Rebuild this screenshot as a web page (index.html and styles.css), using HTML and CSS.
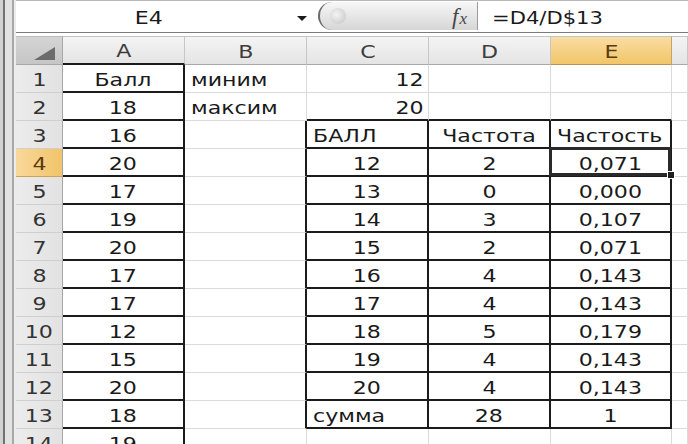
FILE: index.html
```html
<!DOCTYPE html>
<html lang="ru">
<head>
<meta charset="utf-8">
<title>Excel — частость</title>
<link rel="stylesheet" href="styles.css">
</head>
<body>
<div class="app">
  <div class="edge"></div>
  <div class="main">
    <div class="fbar">
      <div class="namebox"><span class="t">E4</span></div>
      <div class="dd"><span class="tri"></span></div>
      <div class="pill"><span class="orb"></span><span class="fx"><i>f</i><i class="x">x</i></span></div>
      <div class="ftext"><span class="t">=D4/D$13</span></div>
    </div>
    <div class="grid">
      <div class="corner"><span class="tri2"></span></div>
      <div class="ch db"><span class="t">A</span></div>
      <div class="ch"><span class="t">B</span></div>
      <div class="ch"><span class="t">C</span></div>
      <div class="ch"><span class="t">D</span></div>
      <div class="ch sel"><span class="t">E</span></div>
      <div class="ch"></div>

      <div class="rh"><span class="t">1</span></div>
      <div class="cell c dr db"><span class="t">Балл</span></div>
      <div class="cell l"><span class="t">миним</span></div>
      <div class="cell r"><span class="t">12</span></div>
      <div class="cell"></div>
      <div class="cell"></div>
      <div class="cell"></div>

      <div class="rh"><span class="t">2</span></div>
      <div class="cell c dr db"><span class="t">18</span></div>
      <div class="cell l"><span class="t">максим</span></div>
      <div class="cell r db"><span class="t">20</span></div>
      <div class="cell db"></div>
      <div class="cell db"></div>
      <div class="cell"></div>

      <div class="rh"><span class="t">3</span></div>
      <div class="cell c dr db"><span class="t">16</span></div>
      <div class="cell dr"></div>
      <div class="cell l dr db"><span class="t">БАЛЛ</span></div>
      <div class="cell c dr db"><span class="t">Частота</span></div>
      <div class="cell l dr db"><span class="t">Частость</span></div>
      <div class="cell"></div>

      <div class="rh sel"><span class="t">4</span></div>
      <div class="cell c dr db"><span class="t">20</span></div>
      <div class="cell dr"></div>
      <div class="cell c dr db"><span class="t">12</span></div>
      <div class="cell c dr db"><span class="t">2</span></div>
      <div class="cell c dr db active"><span class="t">0,071</span></div>
      <div class="cell"></div>

      <div class="rh"><span class="t">5</span></div>
      <div class="cell c dr db"><span class="t">17</span></div>
      <div class="cell dr"></div>
      <div class="cell c dr db"><span class="t">13</span></div>
      <div class="cell c dr db"><span class="t">0</span></div>
      <div class="cell c dr db"><span class="t">0,000</span></div>
      <div class="cell"></div>

      <div class="rh"><span class="t">6</span></div>
      <div class="cell c dr db"><span class="t">19</span></div>
      <div class="cell dr"></div>
      <div class="cell c dr db"><span class="t">14</span></div>
      <div class="cell c dr db"><span class="t">3</span></div>
      <div class="cell c dr db"><span class="t">0,107</span></div>
      <div class="cell"></div>

      <div class="rh"><span class="t">7</span></div>
      <div class="cell c dr db"><span class="t">20</span></div>
      <div class="cell dr"></div>
      <div class="cell c dr db"><span class="t">15</span></div>
      <div class="cell c dr db"><span class="t">2</span></div>
      <div class="cell c dr db"><span class="t">0,071</span></div>
      <div class="cell"></div>

      <div class="rh"><span class="t">8</span></div>
      <div class="cell c dr db"><span class="t">17</span></div>
      <div class="cell dr"></div>
      <div class="cell c dr db"><span class="t">16</span></div>
      <div class="cell c dr db"><span class="t">4</span></div>
      <div class="cell c dr db"><span class="t">0,143</span></div>
      <div class="cell"></div>

      <div class="rh"><span class="t">9</span></div>
      <div class="cell c dr db"><span class="t">17</span></div>
      <div class="cell dr"></div>
      <div class="cell c dr db"><span class="t">17</span></div>
      <div class="cell c dr db"><span class="t">4</span></div>
      <div class="cell c dr db"><span class="t">0,143</span></div>
      <div class="cell"></div>

      <div class="rh"><span class="t">10</span></div>
      <div class="cell c dr db"><span class="t">12</span></div>
      <div class="cell dr"></div>
      <div class="cell c dr db"><span class="t">18</span></div>
      <div class="cell c dr db"><span class="t">5</span></div>
      <div class="cell c dr db"><span class="t">0,179</span></div>
      <div class="cell"></div>

      <div class="rh"><span class="t">11</span></div>
      <div class="cell c dr db"><span class="t">15</span></div>
      <div class="cell dr"></div>
      <div class="cell c dr db"><span class="t">19</span></div>
      <div class="cell c dr db"><span class="t">4</span></div>
      <div class="cell c dr db"><span class="t">0,143</span></div>
      <div class="cell"></div>

      <div class="rh"><span class="t">12</span></div>
      <div class="cell c dr db"><span class="t">20</span></div>
      <div class="cell dr"></div>
      <div class="cell c dr db"><span class="t">20</span></div>
      <div class="cell c dr db"><span class="t">4</span></div>
      <div class="cell c dr db"><span class="t">0,143</span></div>
      <div class="cell"></div>

      <div class="rh"><span class="t">13</span></div>
      <div class="cell c dr db"><span class="t">18</span></div>
      <div class="cell dr"></div>
      <div class="cell l dr db"><span class="t">сумма</span></div>
      <div class="cell c dr db"><span class="t">28</span></div>
      <div class="cell c dr db"><span class="t">1</span></div>
      <div class="cell"></div>

      <div class="rh"><span class="t">14</span></div>
      <div class="cell c dr db"><span class="t">19</span></div>
      <div class="cell"></div>
      <div class="cell"></div>
      <div class="cell"></div>
      <div class="cell"></div>
      <div class="cell"></div>
    </div>
  </div>
</div>
</body>
</html>
```

FILE: styles.css
```css
html, body {
  margin: 0;
  padding: 0;
  background: #ffffff;
}

body {
  width: 688px;
  height: 444px;
  overflow: hidden;
  font-family: "DejaVu Sans", "Liberation Sans", sans-serif;
  font-size: 17px;
  color: #1a1a1a;
}

.app {
  display: flex;
  height: 444px;
}

.edge {
  width: 16px;
  flex: none;
  background: linear-gradient(to right,
    #d2d2d2 0, #d2d2d2 3px,
    #727272 3px, #727272 5px,
    #e2e2e2 5px, #e2e2e2 12px,
    #a8a8a8 12px, #a8a8a8 14px,
    #ececec 14px, #ececec 16px);
}

.main {
  flex: 1;
  display: flex;
  flex-direction: column;
  min-width: 0;
}

.t {
  display: inline-block;
  transform: scaleX(1.3);
  transform-origin: center;
  white-space: nowrap;
}

/* formula bar */
.fbar {
  box-sizing: border-box;
  height: 33px;
  flex: none;
  display: flex;
  border-top: 1px solid #b9b9b9;
  border-bottom: 1px solid #7b7b7b;
  background: #fff;
}

.namebox {
  width: 266px;
  display: flex;
  align-items: center;
  justify-content: center;
  padding-top: 3px;
  box-sizing: border-box;
}

.dd {
  width: 36px;
  display: flex;
  align-items: center;
  padding-left: 15px;
  box-sizing: border-box;
}

.tri {
  width: 0;
  height: 0;
  border-left: 5px solid transparent;
  border-right: 5px solid transparent;
  border-top: 5px solid #1a1a1a;
  margin-top: 3px;
}

.pill {
  box-sizing: border-box;
  width: 160px;
  height: 28px;
  margin-top: 1px;
  display: flex;
  align-items: center;
  justify-content: space-between;
  padding: 0 10px 0 10px;
  border-left: 2px solid #6a6a6a;
  border-right: 1px solid #9c9c9c;
  border-radius: 14px 0 0 14px;
  background: linear-gradient(to bottom, #f7f7f7 0%, #e8e8e8 45%, #d6d6d6 100%);
}

.orb {
  width: 16px;
  height: 16px;
  border-radius: 50%;
  background: radial-gradient(circle at 40% 40%, #f4f4f4 0%, #d9d9d9 55%, #c2c2c2 100%);
}

.fx {
  font-family: "Liberation Serif", "DejaVu Serif", serif;
  color: #464646;
  display: flex;
  align-items: baseline;
  padding-top: 1px;
}

.fx i {
  font-style: italic;
  font-size: 23px;
}

.fx .x {
  font-size: 17px;
  margin-left: 1px;
}

.ftext {
  flex: 1;
  display: flex;
  align-items: center;
  padding-left: 14px;
  padding-top: 2px;
}

.ftext .t {
  transform: scaleX(1.24);
  transform-origin: left;
}

/* grid */
.grid {
  margin-top: 3px;
  display: grid;
  grid-template-columns: 47px 122px 122px 122px 122px 121px 1fr;
  grid-template-rows: 29px repeat(14, 28px);
}

.grid > div {
  box-sizing: border-box;
  min-width: 0;
  overflow: hidden;
  display: flex;
  align-items: center;
  white-space: nowrap;
}

.corner {
  background: linear-gradient(to bottom, #d4d4d4, #c6c6c6);
  border-top: 1px solid #bdbdbd;
  border-right: 1px solid #a8a8a8;
  border-bottom: 1px solid #a8a8a8;
  justify-content: flex-end;
  align-items: flex-end !important;
  padding: 0 7px 4px 0;
}

.tri2 {
  width: 0;
  height: 0;
  border-left: 21px solid transparent;
  border-bottom: 13px solid #6c6c6c;
}

.ch {
  background: linear-gradient(to bottom, #f4f4f4, #e4e4e4);
  border-top: 1px solid #c4c4c4;
  border-right: 1px solid #c6c6c6;
  border-bottom: 1px solid #a9a9a9;
  justify-content: center;
  color: #3d3d3d;
  padding-top: 2px;
}

.ch.sel {
  background: linear-gradient(to bottom, #f9dda3, #f2c568);
  color: #5a3b0b;
  border-right-color: #c9a25c;
  border-bottom-color: #b8924e;
}

.rh {
  background: linear-gradient(to right, #ececec, #e2e2e2);
  border-right: 1px solid #a6a6a6;
  border-bottom: 1px solid #cfcfcf;
  justify-content: center;
  color: #333;
  padding-top: 3px;
}

.rh.sel {
  background: linear-gradient(to right, #f8d89b, #f2c46a);
  color: #5a3b0b;
  border-bottom-color: #c9a25c;
}

.cell {
  background: #fff;
  border-right: 1px solid #dadada;
  border-bottom: 1px solid #dadada;
  padding-top: 3px;
}

.c { justify-content: center; }
.l { justify-content: flex-start; padding-left: 6px; }
.l .t { transform-origin: left; }
.r { justify-content: flex-end; padding-right: 4px; }
.r .t { transform-origin: right; }

.grid > .db { border-bottom: 2px solid #1b1b1b; }
.grid > .dr { border-right: 2px solid #1b1b1b; }

.grid > .active {
  position: relative;
  overflow: visible;
  z-index: 2;
}

.active::after {
  content: "";
  position: absolute;
  left: -2px;
  top: -2px;
  right: -1px;
  bottom: -1px;
  border: 3px solid #2a2a2a;
  pointer-events: none;
}

.active::before {
  content: "";
  position: absolute;
  right: -5px;
  bottom: -4px;
  width: 6px;
  height: 6px;
  background: #1f1f1f;
  border: 1px solid #fff;
  z-index: 3;
}
```
